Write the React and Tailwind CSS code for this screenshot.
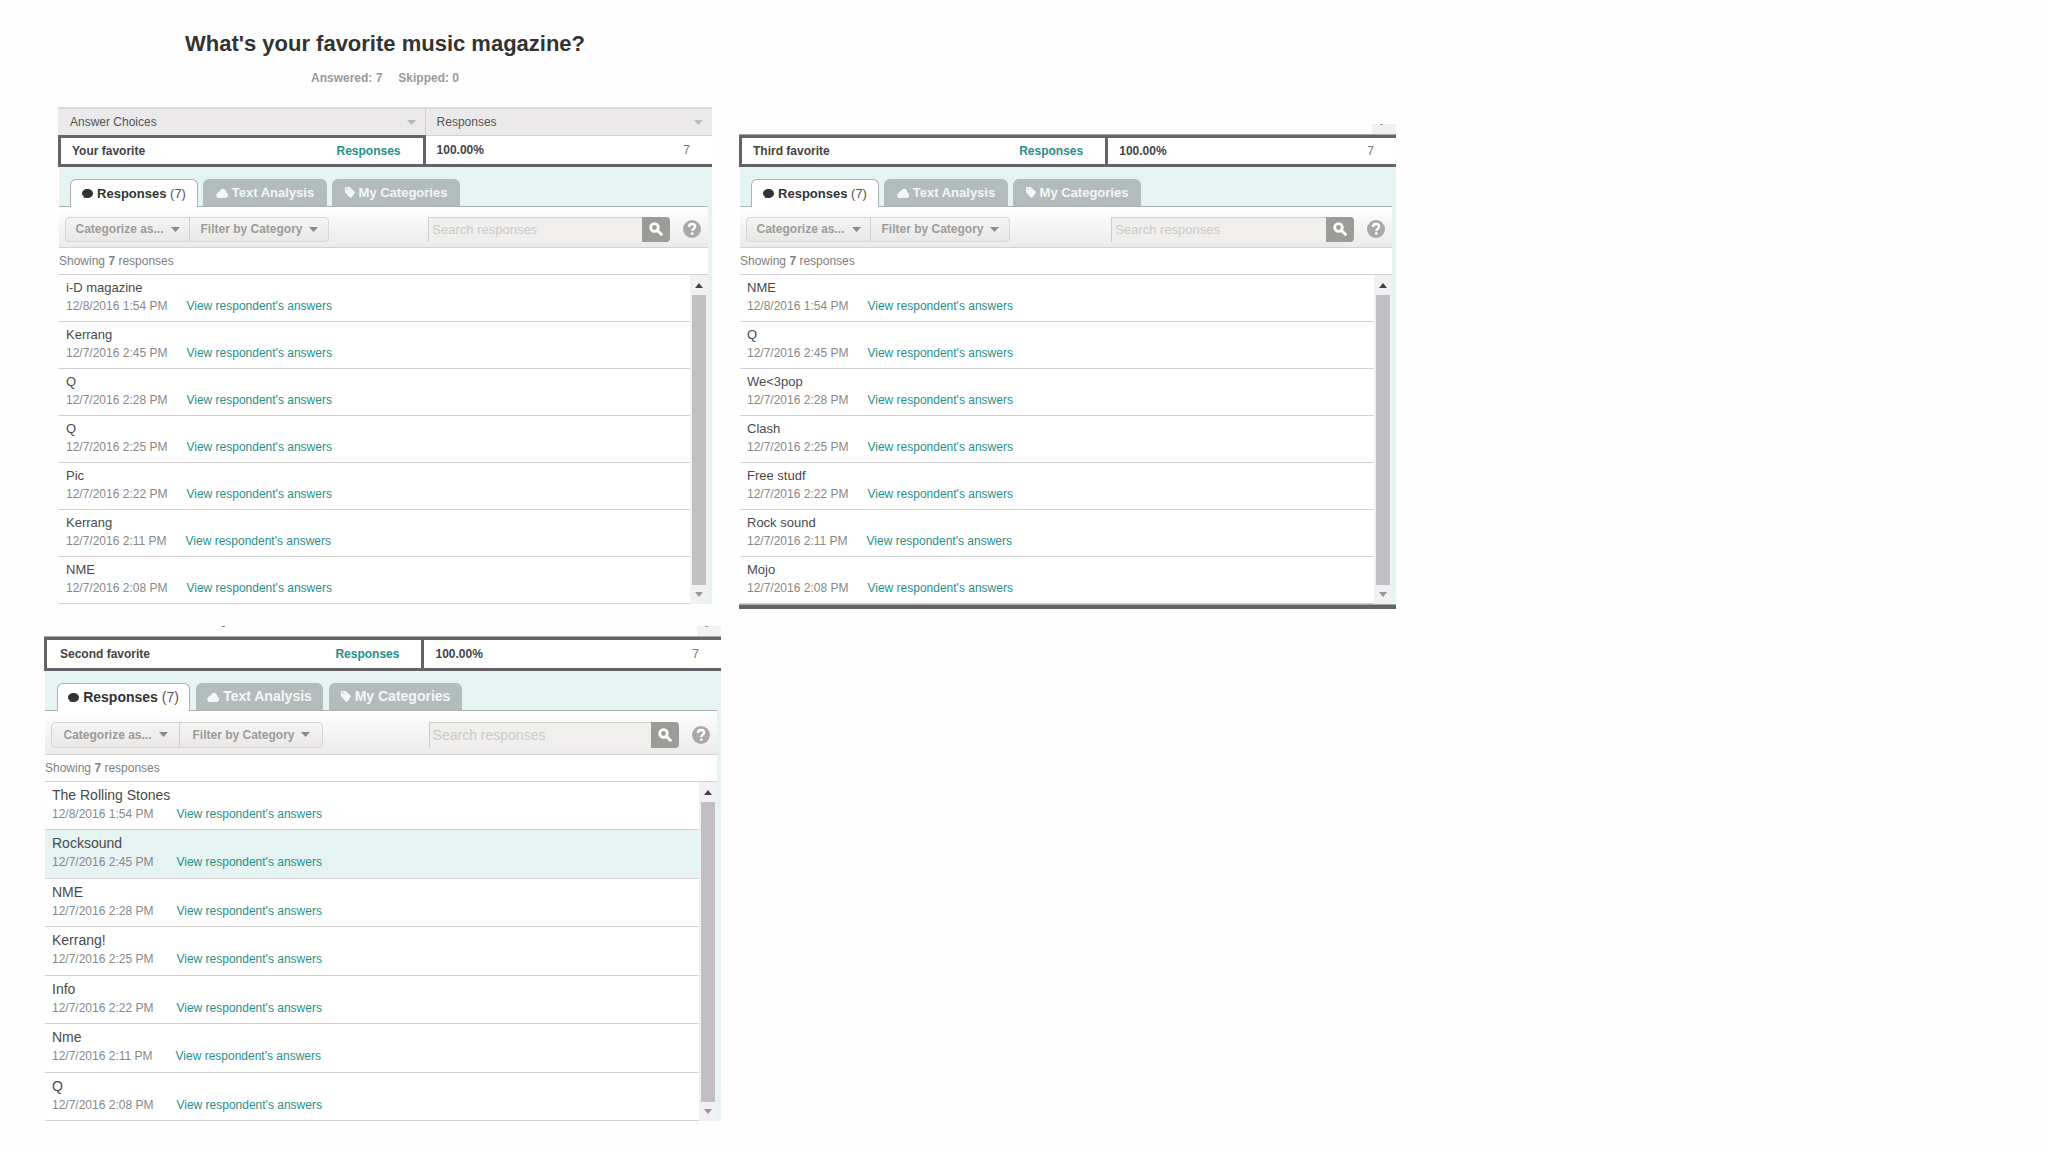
import { useState } from 'react'

const TIMES = [
  '12/8/2016 1:54 PM',
  '12/7/2016 2:45 PM',
  '12/7/2016 2:28 PM',
  '12/7/2016 2:25 PM',
  '12/7/2016 2:22 PM',
  '12/7/2016 2:11 PM',
  '12/7/2016 2:08 PM',
]

const FIRST = ['i-D magazine', 'Kerrang', 'Q', 'Q', 'Pic', 'Kerrang', 'NME']
const SECOND = ['The Rolling Stones', 'Rocksound', 'NME', 'Kerrang!', 'Info', 'Nme', 'Q']
const THIRD = ['NME', 'Q', 'We<3pop', 'Clash', 'Free studf', 'Rock sound', 'Mojo']

const SIZES = {
  normal: {
    row: 'h-8',
    label: 'pl-[11px]',
    tabBar: 'gap-[5px] pl-[11px] text-[13px]',
    tabs: 'w-32',
    midTab: 'w-[124px]',
    toolbar: 'h-[41px]',
    button: 'h-[25px]',
    categorize: 'w-[124px]',
    filter: 'w-[138px]',
    input: 'text-[13px]',
    list: 'min-h-[329px]',
    name: 'text-[13px] leading-[18px]',
    meta: 'gap-[19px]',
  },
  large: {
    row: 'h-[34px]',
    label: 'pl-[13px]',
    tabBar: 'gap-[6px] pl-3 text-[14px]',
    tabs: 'w-[133px]',
    midTab: 'w-[127px]',
    toolbar: 'h-[44px]',
    button: 'h-[26px]',
    categorize: 'w-32',
    filter: 'w-[142px]',
    input: 'text-[14px]',
    list: 'min-h-[339px]',
    name: 'text-[14px] leading-[19px]',
    meta: 'gap-[23px]',
  },
}

export default function App() {
  return (
    <div
      className="min-h-screen bg-[#fefefe] grid grid-cols-[739fr_657fr_652fr] items-start text-[#444]"
      style={{ fontFamily: '"Liberation Sans", Arial, sans-serif' }}
    >
      <main className="pl-11 pr-[18px] pb-8">
        <div className="ml-[14px] mr-[9px]">
          <header className="pt-7 text-center">
            <h1 className="text-[22px] leading-8 font-bold text-[#333]">
              What's your favorite music magazine?
            </h1>
            <p className="mt-[9px] mb-5 text-[12px] leading-[18px] font-bold text-[#999] flex justify-center gap-4">
              <span>Answered: 7</span>
              <span>Skipped: 0</span>
            </p>
          </header>
          <Panel label="Your favorite" answers={FIRST} size="normal" header />
        </div>

        <div className="mt-[22px]">
          <CutStrip dot />
          <Panel label="Second favorite" answers={SECOND} size="large" active={1} />
        </div>
      </main>

      <section className="pt-[124px]">
        <CutStrip />
        <Panel label="Third favorite" answers={THIRD} size="normal" />
        <div className="h-[5px] bg-[#656368] border-t border-[#aaa]" />
      </section>
    </div>
  )
}

function Panel({ label, answers, size, header, active }) {
  const s = SIZES[size]
  const [query, setQuery] = useState('')

  return (
    <section>
      <table className="w-full table-fixed border-separate border-spacing-0 text-[12px] leading-4">
        {header && (
          <thead>
            <tr className="h-7 text-left text-[#555] bg-[#ebe9ea]">
              <th className="w-[56.2%] pl-3 pr-[9px] font-normal border-t-2 border-r border-t-[#dad8d9] border-r-[#cfcdce]">
                <span className="flex items-center justify-between">
                  Answer Choices <Caret className="w-[9px] h-[5px] text-[#bbb]" />
                </span>
              </th>
              <th className="pl-[11px] pr-[9px] font-normal border-t-2 border-[#dad8d9]">
                <span className="flex items-center justify-between">
                  Responses <Caret className="w-[9px] h-[5px] text-[#bbb]" />
                </span>
              </th>
            </tr>
          </thead>
        )}
        <tbody>
          <tr className={`${s.row} bg-white`}>
            <td className={`${s.label} w-[56.2%] pr-[22px] border-[3px] border-[#656368]`}>
              <span className="flex items-center justify-between font-bold">
                {label}
                <a href="#responses" className="text-[#26908a]">Responses</a>
              </span>
            </td>
            <td
              className={`pl-[11px] pr-[22px] border-b-[3px] border-b-[#656368] ${
                header ? 'border-t border-t-[#d0d0d0]' : 'border-t-[3px] border-t-[#656368]'
              }`}
            >
              <span className="flex items-center justify-between">
                <b>100.00%</b>
                <span className="text-[#777]">7</span>
              </span>
            </td>
          </tr>
        </tbody>
      </table>

      <div className="bg-[#e5f3f2] ml-px pr-1 pt-3">
        {/* Tabs */}
        <div className={`${s.tabBar} flex h-7 border-b border-[#a9b3b2] font-bold`}>
          <button className={`${s.tabs} h-7 flex items-center justify-center gap-1 rounded-t-md border border-b-0 border-[#a9b3b2] bg-white text-[#333]`}>
            <BubbleIcon />
            <span>Responses <span className="font-normal text-[#555]">(7)</span></span>
          </button>
          <button className={`${s.midTab} flex items-center justify-center gap-1 rounded-t-md bg-[#b3bcbc] text-[#f4f6f6]`}>
            <CloudIcon />
            Text Analysis
          </button>
          <button className={`${s.tabs} flex items-center justify-center gap-1 rounded-t-md bg-[#b3bcbc] text-[#f4f6f6]`}>
            <TagIcon />
            My Categories
          </button>
        </div>

        {/* Toolbar */}
        <div className={`${s.toolbar} flex items-center pl-[6px] pr-[7px] pt-1 bg-linear-to-b from-white to-[#eceaea] border-b border-[#d3d1d2]`}>
          <div className={`${s.button} flex rounded-sm border border-[#d6d5d3] bg-linear-to-b from-[#f5f4f4] to-[#e9e8e7] text-[12px] font-bold text-[#9c9c9a]`}>
            <button className={`${s.categorize} flex items-center justify-center gap-[7px] border-r border-[#d0cfcd]`}>
              Categorize as... <Caret className="w-[9px] h-[5px] text-[#8c8c8a]" />
            </button>
            <button className={`${s.filter} flex items-center justify-center gap-[6px]`}>
              Filter by Category <Caret className="w-[9px] h-[5px] text-[#8c8c8a]" />
            </button>
          </div>
          <form
            className={`${s.button} w-[38%] ml-auto flex`}
            onSubmit={(e) => e.preventDefault()}
          >
            <input
              type="text"
              aria-label="Search responses"
              placeholder="Search responses"
              value={query}
              onChange={(e) => setQuery(e.target.value)}
              className={`${s.input} min-w-0 flex-1 px-[3px] bg-[#f0efed] border-t border-l border-[#cfcfca] placeholder:text-[#cacac8]`}
            />
            <button aria-label="Search" className="w-7 flex items-center justify-center rounded-r-sm bg-[#9b9b98]">
              <SearchIcon />
            </button>
          </form>
          <button aria-label="Help" className="ml-[13px]">
            <HelpIcon />
          </button>
        </div>

        <p className="h-[27px] leading-[27px] border-b border-[#d3d1d2] bg-white text-[12px] text-[#808080]">
          Showing <b>7</b> responses
        </p>

        {/* Answers with the scroll bar beside them */}
        <div className="flex bg-white">
          <ul className={`${s.list} flex-1 flex flex-col`}>
            {answers.map((name, i) => (
              <li
                key={i}
                className={`flex-1 pl-[7px] pt-1 border-b border-[#d3d1d2] ${
                  i === active ? 'bg-[#e5f3f2]' : ''
                }`}
              >
                <p className={`${s.name} text-[#4a4a4a]`}>{name}</p>
                <p className={`${s.meta} text-[12px] leading-[18px] text-[#888] flex`}>
                  {TIMES[i]}
                  <a href="#respondent" className="text-[#26908a]">View respondent's answers</a>
                </p>
              </li>
            ))}
          </ul>
          <div className="w-[18px] flex flex-col items-center bg-[#f1f0f2]">
            <div className="h-5 flex items-center">
              <Caret className="w-2 h-[5px] rotate-180 text-[#444]" />
            </div>
            <div className="flex-1 w-[14px] bg-[#c1bfc2]" />
            <div className="h-[19px] flex items-center">
              <Caret className="w-2 h-[5px] text-[#999]" />
            </div>
          </div>
        </div>
      </div>
    </section>
  )
}

// Remainder of a scrolled list above the row
function CutStrip({ dot }) {
  return (
    <div className="h-[11px] flex border-b border-[#aaa]">
      <div className="flex-1">
        {dot && <div className="ml-[27.3%] w-[3px] h-px bg-[#888]" />}
      </div>
      <div className="w-6 pl-2 bg-[#f1f0f2]">
        <div className="w-[3px] h-px bg-[#999]" />
      </div>
    </div>
  )
}

function Caret({ className }) {
  return (
    <svg viewBox="0 0 8 5" preserveAspectRatio="none" className={className} fill="currentColor">
      <path d="M0 0h8L4 5z" />
    </svg>
  )
}

function BubbleIcon() {
  return (
    <svg width="11" height="11" viewBox="0 0 11 11" fill="currentColor">
      <path d="M5.500 1C8.600 1 11 2.900 11 5.400S8.600 10 5.500 10c-.7 0-1.300-.1-1.900-.3L1.500 10l.6-1.300C.8 7.900 0 6.700 0 5.400 0 2.900 2.400 1 5.500 1z" />
    </svg>
  )
}

function CloudIcon() {
  return (
    <svg width="12" height="10" viewBox="0 0 12 10" fill="currentColor">
      <path d="M2.500 10A2.500 2.500 0 0 1 1.500 5.300C1.700 4 2.700 3.300 3.800 3.500 4.300 1.700 5.500.7 7 .7c2 0 3.300 1.500 3.200 3.600C11.400 5 12 6 12 7.200 12 8.900 10.900 10 9.400 10z" />
    </svg>
  )
}

function TagIcon() {
  return (
    <svg width="10" height="11" viewBox="0 0 10 11" fill="currentColor">
      <path fillRule="evenodd" d="M0 1.200C0 .5.5 0 1.200 0h3.300L9.300 4.300c.6.600.7 1.200.2 1.900L6.600 10.300c-.5.700-1.300.7-1.900.1L0 5.200zM2 1.300a.8.800 0 1 0 0 1.600.8.800 0 0 0 0-1.600z" />
    </svg>
  )
}

function SearchIcon() {
  return (
    <svg width="14" height="14" viewBox="0 0 14 14" fill="none" stroke="#fff">
      <circle cx="5.500" cy="5.500" r="3.800" strokeWidth="2.800" />
      <path d="M8.700 8.700l3.600 3.600" strokeWidth="3" strokeLinecap="round" />
    </svg>
  )
}

function HelpIcon() {
  return (
    <svg width="18" height="18" viewBox="0 0 18 18">
      <circle cx="9" cy="9" r="9" fill="#a9a9a7" />
      <path d="M6 7c0-1.900 1.300-3 3.100-3s3 1.100 3 2.600c0 2-2.700 2-2.700 4.400" fill="none" stroke="#fff" strokeWidth="2.400" />
      <circle cx="9.300" cy="13.600" r="1.400" fill="#fff" />
    </svg>
  )
}
